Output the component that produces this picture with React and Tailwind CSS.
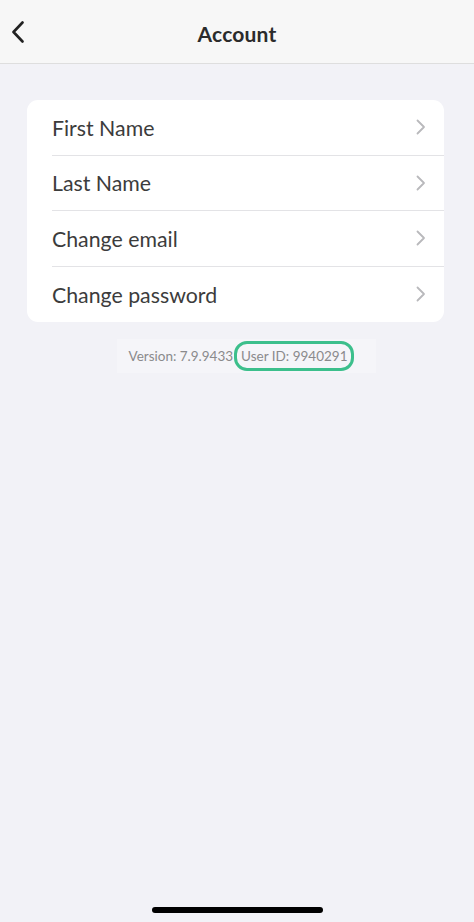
import React from "react";

const items = ["First Name", "Last Name", "Change email", "Change password"];

function Chevron() {
  return (
    <svg width="12" height="16" viewBox="0 0 12 16" fill="none">
      <path d="M2.5 1.5 L9 8 L2.5 14.5" stroke="#b9b9bc" strokeWidth="1.8" strokeLinecap="round" strokeLinejoin="round" />
    </svg>
  );
}

export default function App() {
  return (
    <div
      className="flex h-[922px] w-[474px] flex-col bg-[#f2f2f7]"
      style={{ fontFamily: "Lato, 'Noto Sans', sans-serif" }}
    >
      <header className="relative flex h-[64px] shrink-0 items-center justify-center border-b border-[#dedede] bg-[#f7f7f7]">
        <button className="absolute left-[10px] top-[20px] flex h-[24px] w-[16px] items-center justify-center">
          <svg width="14" height="22" viewBox="0 0 14 22" fill="none">
            <path d="M11.5 1.5 L2.5 11 L11.5 20.5" stroke="#222" strokeWidth="2.6" strokeLinecap="round" strokeLinejoin="round" />
          </svg>
        </button>
        <h1 className="mt-[4px] text-[21px] font-bold tracking-[0.2px] text-[#2b2b2b]">Account</h1>
      </header>

      <main className="flex flex-col pl-[27px] pr-[30px] pt-[36px]">
        <div className="overflow-hidden rounded-[11px] bg-white pl-[25px]">
          {items.map((label, i) => (
            <div
              key={label}
              className={`flex h-[55.5px] items-center justify-between pr-[17px] ${
                i < items.length - 1 ? "border-b border-[#e3e3e6]" : ""
              }`}
            >
              <span className="pt-[3px] text-[21.3px] text-[#3c3c3c]">{label}</span>
              <Chevron />
            </div>
          ))}
        </div>

        <div className="mt-[17px] flex justify-center pl-[22px]">
          <div className="flex items-center bg-[#f5f5f9] pl-[12px] pr-[22px] py-[2px] text-[13.5px] text-[#8a8a8c]">
            <span>Version: 7.9.9433</span>
            <span className="ml-[1px] rounded-[13px] border-[3px] border-[#3cbf8c] px-[4px] py-[3px] leading-[18px]">
              User ID: 9940291
            </span>
          </div>
        </div>
      </main>

      <div className="mt-auto flex justify-center pb-[9px]">
        <div className="h-[6px] w-[171px] rounded-full bg-black" />
      </div>
    </div>
  );
}
